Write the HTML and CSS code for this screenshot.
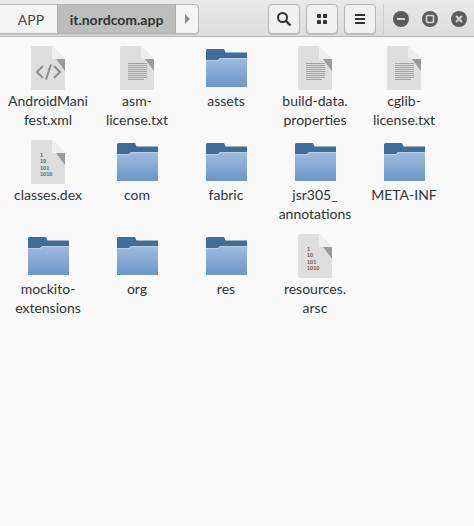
FILE: index.html
```html
<!DOCTYPE html>
<html lang="en">
<head>
  <meta charset="UTF-8" />
  <title>it.nordcom.app</title>
  <link rel="stylesheet" href="styles.css">
</head>
<body>

  <svg class="defs" width="0" height="0">
    <defs>
      <linearGradient id="folder-front" x1="0" y1="0" x2="0" y2="1">
        <stop offset="0" stop-color="#9dbce0"/>
        <stop offset="1" stop-color="#6b96c6"/>
      </linearGradient>
    </defs>
    <symbol id="folder" viewBox="0 0 41 38">
      <path d="M0 1.500Q0 0 1.500 0H18L19.500 3.500H41V14H0Z" fill="#3f6d97"/>
      <path d="M0 11H12L14 9H41V38H0Z" fill="url(#folder-front)"/>
      <path d="M0 11H12L14 9H41V10H14.500L12.500 12H0Z" fill="#b5cde8"/>
    </symbol>
    <symbol id="page" viewBox="0 0 34 44">
      <path d="M1.500 0H21L34 13V42.500Q34 44 32.500 44H1.500Q0 44 0 42.500V1.500Q0 0 1.500 0Z" fill="#dedede"/>
      <path d="M21 0L34 13H21Z" fill="#eeeeee"/>
      <path d="M25 13H34V25Z" fill="#9a9a9a"/>
    </symbol>
    <symbol id="lines" viewBox="0 0 34 44">
      <path d="M8 17.500H27M8 19.500H27M8 21.500H27M8 23.500H27M8 25.500H27M8 27.500H27M8 29.500H27M8 31.500H27M8 33.500H24" stroke="#a2a2a2" stroke-width="1.200"/>
    </symbol>
  </svg>

  <header class="toolbar">
    <div class="pathbar">
      <span class="crumb">APP</span>
      <span class="crumb current">it.nordcom.app</span>
      <span class="crumb more"><svg width="7" height="10" viewBox="0 0 7 10"><path d="M1 0L6 5L1 10Z" fill="#8c8c8c"/></svg></span>
    </div>
    <div class="tools">
      <span class="tool">
        <svg width="16" height="16" viewBox="0 0 16 16"><circle cx="6.500" cy="6.500" r="4.500" fill="none" stroke="#2e3436" stroke-width="2"/><path d="M10 10L14.500 14.500" stroke="#2e3436" stroke-width="2.400"/></svg>
      </span>
      <span class="tool">
        <svg width="12" height="12" viewBox="0 0 12 12" fill="#2e3436"><rect x="1" y="1" width="4" height="4" rx=".7"/><rect x="7" y="1" width="4" height="4" rx=".7"/><rect x="1" y="7" width="4" height="4" rx=".7"/><rect x="7" y="7" width="4" height="4" rx=".7"/></svg>
      </span>
      <span class="tool">
        <svg width="12" height="12" viewBox="0 0 12 12" fill="#2e3436"><rect x="1" y="1" width="10" height="2"/><rect x="1" y="5" width="10" height="2"/><rect x="1" y="9" width="10" height="2"/></svg>
      </span>
    </div>
    <div class="winctl">
      <span class="ctl"><svg width="10" height="10" viewBox="0 0 10 10"><rect x="1" y="4" width="8" height="2" fill="#d4d4d4"/></svg></span>
      <span class="ctl"><svg width="10" height="10" viewBox="0 0 10 10"><rect x="1.500" y="1.500" width="7" height="7" rx="1" fill="none" stroke="#d4d4d4" stroke-width="1.600"/></svg></span>
      <span class="ctl"><svg width="10" height="10" viewBox="0 0 10 10"><path d="M2 2L8 8M8 2L2 8" stroke="#d4d4d4" stroke-width="2"/></svg></span>
    </div>
  </header>

  <main class="files">
    <div class="file">
      <svg class="page-icon" width="34" height="44"><use href="#page"/><path d="M12 20L6 26L12 32M23 20L29 26L23 32M20 18.500L15 33.500" fill="none" stroke="#8c8c8c" stroke-width="2"/></svg>
      <span class="name">AndroidMani<br>fest.xml</span>
    </div>
    <div class="file">
      <svg class="page-icon" width="34" height="44"><use href="#page"/><use href="#lines"/></svg>
      <span class="name">asm-<br>license.txt</span>
    </div>
    <div class="file">
      <svg class="folder-icon" width="41" height="38"><use href="#folder"/></svg>
      <span class="name">assets</span>
    </div>
    <div class="file">
      <svg class="page-icon" width="34" height="44"><use href="#page"/><use href="#lines"/></svg>
      <span class="name">build-data.<br>properties</span>
    </div>
    <div class="file">
      <svg class="page-icon" width="34" height="44"><use href="#page"/><use href="#lines"/></svg>
      <span class="name">cglib-<br>license.txt</span>
    </div>

    <div class="file">
      <div class="binary">
        <svg class="page-icon" width="34" height="44"><use href="#page"/></svg>
        <span class="digits">1<br>10<br>101<br>1010</span>
      </div>
      <span class="name">classes.dex</span>
    </div>
    <div class="file">
      <svg class="folder-icon" width="41" height="38"><use href="#folder"/></svg>
      <span class="name">com</span>
    </div>
    <div class="file">
      <svg class="folder-icon" width="41" height="38"><use href="#folder"/></svg>
      <span class="name">fabric</span>
    </div>
    <div class="file">
      <svg class="folder-icon" width="41" height="38"><use href="#folder"/></svg>
      <span class="name">jsr305_<br>annotations</span>
    </div>
    <div class="file">
      <svg class="folder-icon" width="41" height="38"><use href="#folder"/></svg>
      <span class="name">META-INF</span>
    </div>

    <div class="file">
      <svg class="folder-icon" width="41" height="38"><use href="#folder"/></svg>
      <span class="name">mockito-<br>extensions</span>
    </div>
    <div class="file">
      <svg class="folder-icon" width="41" height="38"><use href="#folder"/></svg>
      <span class="name">org</span>
    </div>
    <div class="file">
      <svg class="folder-icon" width="41" height="38"><use href="#folder"/></svg>
      <span class="name">res</span>
    </div>
    <div class="file">
      <div class="binary">
        <svg class="page-icon" width="34" height="44"><use href="#page"/></svg>
        <span class="digits">1<br>10<br>101<br>1010</span>
      </div>
      <span class="name">resources.<br>arsc</span>
    </div>
  </main>

</body>
</html>
```

FILE: styles.css
```css
* { box-sizing: border-box; margin: 0; padding: 0; }

html, body {
  height: 100%;
}

body {
  font-family: 'Lato', sans-serif;
  font-size: 14px;
  color: #2e3436;
  background-color: #f9f9f9;
  display: flex;
  flex-direction: column;
  overflow: hidden;
}

.defs {
  position: absolute;
}

/* header bar */
.toolbar {
  height: 37px;
  flex: none;
  display: flex;
  align-items: flex-start;
  padding-top: 4px;
  background: linear-gradient(#e9e9e9, #dcdcdc);
  border-bottom: 1px solid #b6b6b6;
}

.pathbar {
  display: flex;
  height: 30px;
  border: 1px solid #b4b4b4;
  border-left: 0;
  border-radius: 0 4px 4px 0;
  background-color: #f4f4f4;
  box-shadow: 0 1px 0 #c4c4c4;
}

.crumb {
  display: flex;
  align-items: center;
  justify-content: center;
  width: 57px;
  padding-left: 5px;
  color: #444;
}

.crumb.current {
  width: 119px;
  padding-left: 0;
  color: #2e3436;
  font-weight: 700;
  background-color: #bdbdbd;
  border-left: 1px solid #adadad;
  border-right: 1px solid #adadad;
}

.crumb.more {
  width: 22px;
  padding-left: 0;
}

.tools {
  display: flex;
  gap: 6px;
  margin-left: 69px;
}

.tool {
  width: 32px;
  height: 30px;
  display: flex;
  align-items: center;
  justify-content: center;
  border: 1px solid #b4b4b4;
  border-radius: 4px;
  background-color: #f1f1f1;
  box-shadow: 0 1px 0 #c4c4c4;
}

.winctl {
  display: flex;
  gap: 13px;
  height: 30px;
  align-items: center;
  margin-left: 7px;
  padding-left: 9px;
  border-left: 1px solid #cdcdcd;
}

.ctl {
  width: 16px;
  height: 16px;
  border-radius: 50%;
  display: flex;
  align-items: center;
  justify-content: center;
  background-color: #5c5c5c;
}

/* icon grid */
.files {
  display: grid;
  grid-template-columns: repeat(5, 89px);
  grid-auto-rows: 93.800px;
  padding: 8px 0 0 3.500px;
}

.file {
  display: flex;
  flex-direction: column;
  align-items: center;
  text-align: center;
}

.page-icon {
  display: block;
  flex: none;
  margin: 1px 0 1px;
}

.folder-icon {
  display: block;
  flex: none;
  margin: 4px 0 4px;
}

.binary {
  position: relative;
}

.digits {
  position: absolute;
  top: 13px;
  left: 9px;
  font-family: 'Liberation Sans', sans-serif;
  font-size: 5.600px;
  line-height: 6.500px;
  font-weight: 700;
  text-align: left;
  color: #666;
}

.name {
  line-height: 19px;
  white-space: nowrap;
}
```
